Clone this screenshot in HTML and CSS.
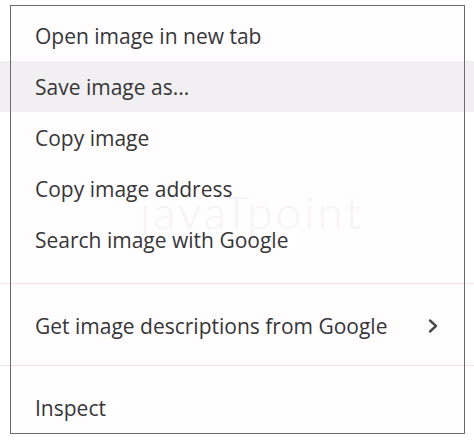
FILE: index.html
```html
<!DOCTYPE html>
<html>
<head>
<meta charset="utf-8">
<link rel="stylesheet" href="styles.css">
</head>
<body>
<div class="menu">
  <div class="watermark">javaTpoint</div>
  <div class="item">Open image in new tab</div>
  <div class="item hover">Save image as...</div>
  <div class="item">Copy image</div>
  <div class="item">Copy image address</div>
  <div class="item">Search image with Google</div>
  <div class="sep sep-1"></div>
  <div class="item sub">
    <span>Get image descriptions from Google</span>
    <svg class="chev" width="12" height="16" viewBox="0 0 12 16"><polyline points="3,2.5 9,8 3,13.5" fill="none" stroke="#4a4a4a" stroke-width="2.4" stroke-linecap="round" stroke-linejoin="round"/></svg>
  </div>
  <div class="sep sep-2"></div>
  <div class="item last">Inspect</div>
</div>
</body>
</html>
```

FILE: styles.css
```css
html, body {
  margin: 0;
  padding: 0;
  background: #ffffff;
}
body {
  width: 474px;
  height: 440px;
  overflow: hidden;
  font-family: "Open Sans", "Noto Sans", sans-serif;
  font-size: 21px;
  color: #363638;
}
.menu {
  position: relative;
  margin: 5px 9px 0 10px;
  height: 429px;
  box-sizing: border-box;
  padding-top: 5px;
  background: #fffdfe;
  display: flex;
  flex-direction: column;
}
.menu::after {
  content: "";
  position: absolute;
  inset: 0;
  border: 1px solid #6a6a6a;
  pointer-events: none;
}
.watermark {
  position: absolute;
  left: 130px;
  top: 197px;
  height: 20px;
  line-height: 20px;
  font-family: "Lato", sans-serif;
  font-weight: 300;
  font-size: 46px;
  color: #f6f3f5;
  letter-spacing: 3px;
}
.item {
  position: relative;
  height: 51px;
  display: flex;
  align-items: center;
  padding-left: 25px;
  flex-shrink: 0;
}
.hover {
  margin: 0 -9px 0 -10px;
  padding-left: 35px;
  background: #f1eff2;
}
.sep {
  height: 1px;
  background: #f7dfe5;
  margin: 0 -9px 0 -10px;
  flex-shrink: 0;
}
.sep-1 { margin-top: 18px; margin-bottom: 16px; }
.sep-2 { margin-top: 14px; margin-bottom: 16px; }
.sub {
  justify-content: space-between;
  padding-right: 26px;
}
.chev {
  display: block;
}
```
